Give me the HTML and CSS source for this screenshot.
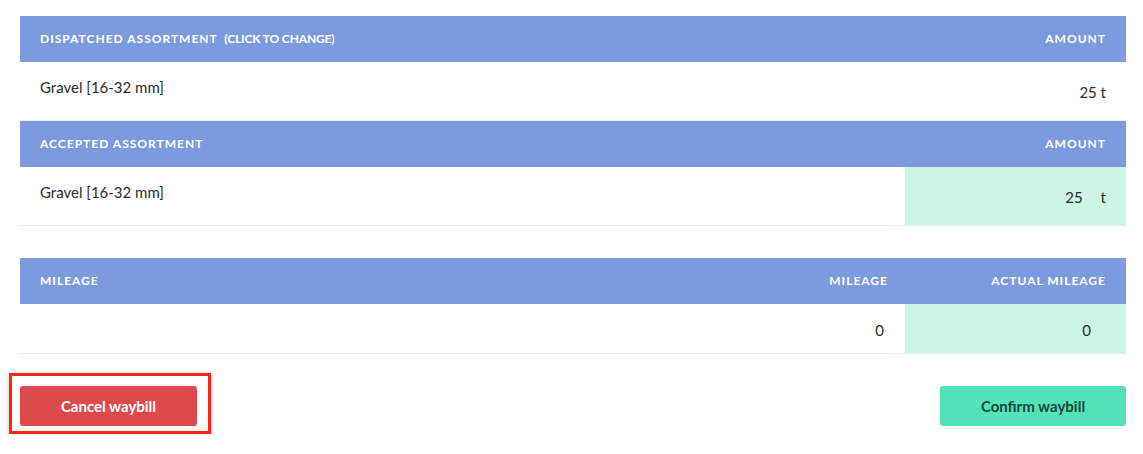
FILE: index.html
```html
<!DOCTYPE html>
<html>
<head>
<meta charset="utf-8">
<link rel="stylesheet" href="styles.css">
</head>
<body>
<div class="page">
  <section class="table t-assort">
    <div class="head">
      <div class="th">Dispatched assortment <span class="hint">(click to change)</span></div>
      <div class="th right">Amount</div>
    </div>
    <div class="row">
      <div class="td name">Gravel [16-32 mm]</div>
      <div class="td amount">25 t</div>
    </div>
  </section>
  <section class="table t-assort">
    <div class="head">
      <div class="th">Accepted assortment</div>
      <div class="th right">Amount</div>
    </div>
    <div class="row">
      <div class="td name">Gravel [16-32 mm]</div>
      <div class="td green amount-input"><span class="num">25</span><span class="unit">t</span></div>
    </div>
  </section>
  <section class="table t-mileage">
    <div class="head">
      <div class="th">Mileage</div>
      <div class="th right">Mileage</div>
      <div class="th right">Actual mileage</div>
    </div>
    <div class="row">
      <div class="td"></div>
      <div class="td right mil">0</div>
      <div class="td green right actual">0</div>
    </div>
  </section>
  <div class="actions">
    <div class="highlight"><button class="btn cancel">Cancel waybill</button></div>
    <button class="btn confirm">Confirm waybill</button>
  </div>
</div>
</body>
</html>
```

FILE: styles.css
```css
* { box-sizing: border-box; }
html, body { margin: 0; background: #fff; }
body { font-family: Lato, "Open Sans", sans-serif; color: #2b2b2b; }
.page { padding: 16px 17px 0 20px; width: 1143px; }
.table { width: 1106px; }
.table.t-mileage { margin-top: 32px; }
.head { display: grid; height: 46px; background: #7b9bde; align-items: center; }
.t-assort .head, .t-assort .row { grid-template-columns: 1fr 221px; }
.t-mileage .head, .t-mileage .row { grid-template-columns: 1fr 200px 221px; }
.th { color: #fff; font-weight: 700; font-size: 12px; letter-spacing: 1px; text-transform: uppercase; padding: 0 20px; line-height: 16px; white-space: nowrap; }
.th.right { text-align: right; }
.t-mileage .th:nth-child(2) { padding-right: 17px; }
.th .hint { font-size: 12px; letter-spacing: -0.15px; margin-left: 3px; }
.row { display: grid; border-bottom: 1px solid #ececec; }
.t-assort .row { height: 59px; }
.t-mileage .row { height: 50px; }
.td { font-size: 15px; line-height: 20px; }
.td.name { padding: 15px 20px 0; }
.td.amount { text-align: right; padding: 20px 20px 0; }
.green { background: #ccf5e8; }
.amount-input { display: flex; justify-content: flex-end; align-items: flex-start; padding: 20px 20px 0 0; }
.amount-input .unit { margin-left: 18px; }
.mil { padding: 16px 21px 0 0; text-align: right; }
.actual { padding: 16px 35px 0 0; text-align: right; }
.actions { display: flex; justify-content: space-between; align-items: flex-start; margin-top: 32px; }
.highlight { margin: -13px 0 0 -11px; padding: 10px 11px 5px 8px; border: 3px solid #ff2317; box-shadow: 0 2px 4px rgba(0,0,0,0.3); }
.btn { height: 40px; border: 0; border-radius: 3px; font-family: Lato, sans-serif; font-weight: 700; font-size: 15px; cursor: pointer; }
.cancel { width: 177px; background: #dc4a4b; color: #fff; display: block; }
.confirm { width: 186px; background: #52e2b8; color: #124a3b; }
```
